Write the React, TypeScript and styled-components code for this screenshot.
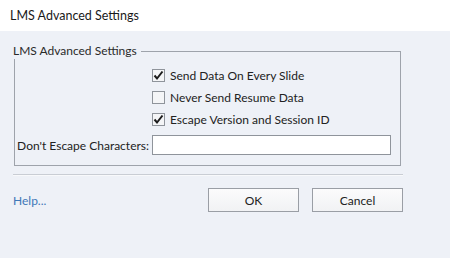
import React from 'react';
import styled, { createGlobalStyle } from 'styled-components';

const GlobalStyle = createGlobalStyle`
  html, body {
    margin: 0;
    padding: 0;
    background: #eef1f7;
  }
  body {
    font-family: Lato, "Noto Sans", sans-serif;
    font-size: 12px;
    color: #1e1e1e;
  }
`;

const Window = styled.div`
  width: 450px;
  height: 258px;
  display: flex;
  flex-direction: column;
  background: #eef1f7;
`;

const TitleBar = styled.header`
  height: 31px;
  display: flex;
  align-items: center;
  padding-left: 10px;
  background: #ffffff;
  font-size: 12.5px;
  color: #1a1a1a;
`;

const Body = styled.main`
  display: flex;
  flex-direction: column;
  padding: 0 47px 0 13px;
`;

const Group = styled.fieldset`
  margin: 12px 2px 0 1px;
  padding: 5px 9px 10px 0;
  border: 1px solid #9ea3ab;
  min-width: 0;
`;

const Legend = styled.legend`
  padding: 0 4px 0 0;
  margin-left: -2px;
  line-height: 16px;
  font-size: 12px;
  color: #2a2a2a;
`;

const Checks = styled.div`
  display: flex;
  flex-direction: column;
  padding-left: 137px;
`;

const CheckRow = styled.label`
  height: 22px;
  display: flex;
  align-items: center;
  gap: 5px;
  color: #222;
`;

const Box = styled.span`
  width: 11px;
  height: 11px;
  border: 1px solid #8f949b;
  background: #f4f5f7;
  display: flex;
  align-items: center;
  justify-content: center;
`;

const FieldRow = styled.div`
  margin-top: 5px;
  display: flex;
  align-items: center;
  gap: 3px;
`;

const FieldLabel = styled.span`
  width: 134px;
  flex: none;
  text-align: right;
  white-space: nowrap;
  color: #222;
`;

const TextBox = styled.input`
  flex: 1;
  height: 20px;
  box-sizing: border-box;
  border: 1px solid #8f949b;
  background: #ffffff;
  padding: 0 3px;
  font: inherit;
  outline: none;
`;

const Separator = styled.hr`
  margin: 8px 0 0 0;
  border: none;
  border-top: 1px solid #c9cdd4;
  border-bottom: 1px solid #f8f9fb;
`;

const Footer = styled.div`
  margin-top: 12px;
  display: flex;
  align-items: center;
`;

const HelpLink = styled.a`
  color: #3f78b8;
  text-decoration: none;
  margin-right: auto;
`;

const Button = styled.button`
  width: 91px;
  height: 24px;
  border: 1px solid #9a9ea5;
  background: linear-gradient(#fbfbfc, #f1f2f4);
  font: inherit;
  color: #222;
  padding: 0;
  & + & {
    margin-left: 13px;
  }
`;

const Check = () => (
  <svg width="11" height="11" viewBox="0 0 11 11">
    <path d="M1.5 5.5 L4 8.5 L9.5 1.5" fill="none" stroke="#1c1c1c" strokeWidth="2" />
  </svg>
);

const options = [
  { label: 'Send Data On Every Slide', checked: true },
  { label: 'Never Send Resume Data', checked: false },
  { label: 'Escape Version and Session ID', checked: true },
];

export default function App() {
  return (
    <Window>
      <GlobalStyle />
      <TitleBar>LMS Advanced Settings</TitleBar>
      <Body>
        <Group>
          <Legend>LMS Advanced Settings</Legend>
          <Checks>
            {options.map((o) => (
              <CheckRow key={o.label}>
                <Box>{o.checked && <Check />}</Box>
                {o.label}
              </CheckRow>
            ))}
          </Checks>
          <FieldRow>
            <FieldLabel>Don't Escape Characters:</FieldLabel>
            <TextBox />
          </FieldRow>
        </Group>
        <Separator />
        <Footer>
          <HelpLink href="#">Help...</HelpLink>
          <Button>OK</Button>
          <Button>Cancel</Button>
        </Footer>
      </Body>
    </Window>
  );
}
